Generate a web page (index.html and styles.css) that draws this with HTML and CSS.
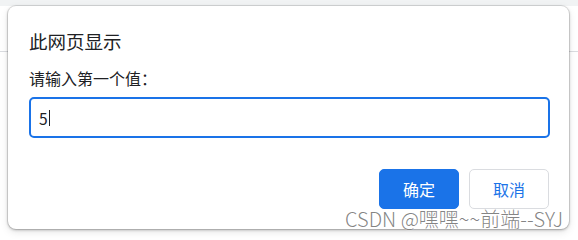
FILE: index.html
```html
<!DOCTYPE html>
<html lang="zh-CN">
<head>
<meta charset="utf-8">
<title>此网页显示</title>
<link rel="stylesheet" href="styles.css">
</head>
<body>
<div class="page">
  <div class="topbar"></div>
  <div class="content-line"></div>
</div>
<div class="dialog">
  <div class="title">此网页显示</div>
  <div class="label">请输入第一个值：</div>
  <div class="field"><span class="value">5</span><span class="caret"></span></div>
  <div class="actions">
    <button class="btn btn-primary">确定</button>
    <button class="btn btn-secondary">取消</button>
  </div>
</div>
<div class="watermark">CSDN @嘿嘿~~前端--SYJ</div>
</body>
</html>
```
FILE: styles.css
```css
html, body {
  margin: 0;
  padding: 0;
  background: #ffffff;
  width: 578px;
  height: 240px;
  overflow: hidden;
  font-family: "Noto Sans CJK SC", "Noto Sans", sans-serif;
}
.page {
  width: 578px;
  height: 240px;
}
.topbar {
  height: 6px;
  background: #f1f3f4;
}
.content-line {
  margin-top: 45px;
  height: 1px;
  background: #dadce0;
}
.dialog {
  position: absolute;
  left: 8px;
  top: 6px;
  width: 561px;
  height: 223px;
  box-sizing: border-box;
  padding: 23px 19px 0 21px;
  background: #ffffff;
  border-radius: 8px;
  box-shadow: 0 0 0 1px rgba(0,0,0,0.10), 0 1px 3px rgba(0,0,0,0.28), 0 3px 8px rgba(0,0,0,0.10);
  display: flex;
  flex-direction: column;
}
.title {
  font-size: 18.5px;
  line-height: 24px;
  color: #202124;
}
.label {
  margin-top: 15px;
  font-size: 16px;
  line-height: 20px;
  color: #202124;
}
.field {
  margin-top: 9px;
  height: 41px;
  box-sizing: border-box;
  border: 2px solid #1a73e8;
  border-radius: 5px;
  display: flex;
  align-items: center;
  padding-left: 8px;
  font-size: 15.5px;
  color: #202124;
}
.caret {
  display: inline-block;
  width: 1px;
  height: 16px;
  background: #202124;
  margin-left: 1px;
}
.actions {
  margin-top: 31px;
  padding-right: 1px;
  display: flex;
  justify-content: flex-end;
  gap: 10px;
}
.btn {
  width: 80px;
  height: 40px;
  border-radius: 5px;
  font-family: "Noto Sans CJK SC", "Noto Sans", sans-serif;
  font-size: 16px;
  padding: 0;
  box-sizing: border-box;
}
.btn-primary {
  background: #1a73e8;
  border: 1px solid #1a73e8;
  color: #ffffff;
}
.btn-secondary {
  background: #ffffff;
  border: 1px solid #dadce0;
  color: #1a73e8;
}
.watermark {
  position: absolute;
  left: 345px;
  top: 207px;
  font-size: 20px;
  line-height: 24px;
  font-weight: 300;
  color: rgba(110,110,110,0.85);
  text-shadow: 0 0 1px #ffffff;
  white-space: nowrap;
}
```
